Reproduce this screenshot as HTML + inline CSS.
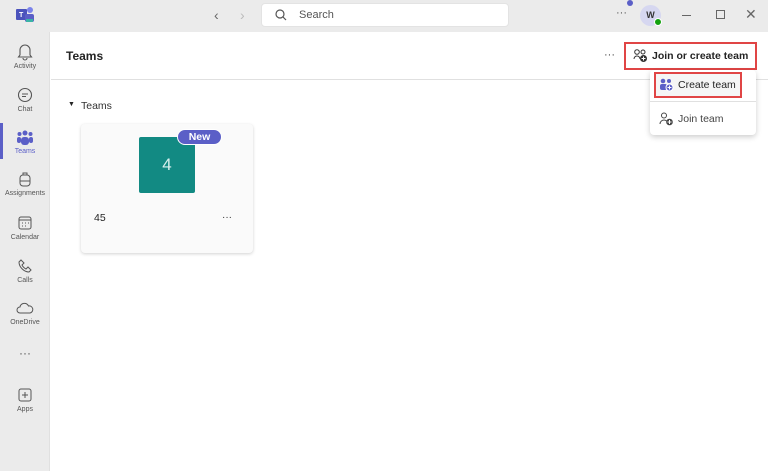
<!DOCTYPE html>
<html><head><style>
*{margin:0;padding:0;box-sizing:border-box}
body{width:768px;height:471px;overflow:hidden;background:#fff;font-family:"Liberation Sans",sans-serif;position:relative;color:#242424}
.a{position:absolute}
.top{left:0;top:0;width:768px;height:32px;background:#ebebeb}
.rail{left:0;top:32px;width:50px;height:439px;background:#ebebeb;border-right:1px solid #e0e0e0}
.ri{position:absolute;left:0;width:50px;text-align:center;font-size:7px;color:#555}
.ri svg{display:block;margin:0 auto 2px}
</style></head><body>
<div class="a top"></div>
<svg class="a" style="left:16px;top:6px" width="20" height="18" viewBox="0 0 20 18"><rect x="0" y="3" width="11" height="11" rx="1" fill="#4b53bc"/><circle cx="14" cy="4" r="3" fill="#7b83eb"/><rect x="9" y="8" width="9" height="8" rx="2" fill="#5b5fc7"/><rect x="10" y="13" width="7" height="3" fill="#3bb3a6"/><text x="3" y="11" font-size="7" fill="#fff" font-family="Liberation Sans" font-weight="bold">T</text></svg>
<div class="a" style="left:214px;top:7px;font-size:14px;color:#666">&#8249;</div>
<div class="a" style="left:240px;top:7px;font-size:14px;color:#bbb">&#8250;</div>
<div class="a" style="left:261px;top:3px;width:248px;height:24px;background:#fff;border-radius:4px;border:1px solid #e3e3e3"></div>
<svg class="a" style="left:275px;top:9px" width="12" height="12" viewBox="0 0 12 12"><circle cx="5" cy="5" r="4" fill="none" stroke="#555" stroke-width="1.2"/><path d="M8 8l3 3" stroke="#555" stroke-width="1.2"/></svg>
<div class="a" style="left:299px;top:9px;font-size:11px;color:#555">Search</div>
<div class="a" style="left:616px;top:7px;font-size:11px;color:#555">···</div>
<div class="a" style="left:627px;top:0;width:6px;height:6px;border-radius:50%;background:#5b5fc7"></div>
<div class="a" style="left:640px;top:5px;width:21px;height:21px;border-radius:50%;background:#d6d7f0;font-size:9px;font-weight:bold;text-align:center;line-height:21px;color:#333">W</div>
<div class="a" style="left:654px;top:18px;width:8px;height:8px;border-radius:50%;background:#13a10e;border:1px solid #fff"></div>
<div class="a" style="left:682px;top:15px;width:9px;height:1px;background:#666"></div>
<div class="a" style="left:716px;top:10px;width:9px;height:9px;border:1px solid #666"></div>
<div class="a" style="left:745px;top:6px;font-size:14px;color:#666">✕</div>

<div class="a rail"></div>
<div class="a" style="left:0;top:123px;width:3px;height:36px;background:#5b5fc7"></div>
<div class="ri" style="top:43px"><svg width="16" height="18" viewBox="0 0 16 18"><path d="M3 12V7a5 5 0 0110 0v5l1.5 2h-13z M6 15a2 2 0 004 0" fill="none" stroke="#555" stroke-width="1.1"/></svg>Activity</div>
<div class="ri" style="top:87px"><svg width="16" height="17" viewBox="0 0 16 17"><circle cx="8" cy="8" r="6.5" fill="none" stroke="#555" stroke-width="1.1"/><path d="M5 7h6M5 9.5h4" stroke="#555"/></svg>Chat</div>
<div class="ri" style="top:129px;color:#5b5fc7"><svg width="18" height="17" viewBox="0 0 18 17"><circle cx="9" cy="4" r="2.5" fill="#5b5fc7"/><circle cx="3.5" cy="5" r="2" fill="#5b5fc7"/><circle cx="14.5" cy="5" r="2" fill="#5b5fc7"/><rect x="5" y="8" width="8" height="8" rx="3" fill="#5b5fc7"/><rect x="1" y="8" width="4" height="6" rx="2" fill="#5b5fc7"/><rect x="13" y="8" width="4" height="6" rx="2" fill="#5b5fc7"/></svg>Teams</div>
<div class="ri" style="top:171px"><svg width="16" height="17" viewBox="0 0 16 17"><rect x="3" y="4" width="10" height="11" rx="3" fill="none" stroke="#555"/><path d="M6 4V2h4v2M3 10h10" stroke="#555" fill="none"/></svg>Assignments</div>
<div class="ri" style="top:215px"><svg width="16" height="17" viewBox="0 0 16 17"><rect x="2" y="2" width="12" height="12" rx="2" fill="none" stroke="#555"/><path d="M2 5h12M5 8h1M8 8h1M11 8h1M5 11h1M8 11h1" stroke="#555"/></svg>Calendar</div>
<div class="ri" style="top:258px"><svg width="16" height="17" viewBox="0 0 16 17"><path d="M4 2l3 3-2 2c1 2 2 3 4 4l2-2 3 3-2 2C7 14 2 9 2 4z" fill="none" stroke="#555"/></svg>Calls</div>
<div class="ri" style="top:300px"><svg width="18" height="17" viewBox="0 0 18 17"><path d="M4 13a3 3 0 010-6 4.5 4.5 0 018.5-1A3.5 3.5 0 0114 13z" fill="none" stroke="#555"/></svg>OneDrive</div>
<div class="ri" style="top:346px;font-size:12px">···</div>
<div class="ri" style="top:387px"><svg width="16" height="17" viewBox="0 0 16 17"><rect x="2" y="2" width="12" height="12" rx="2" fill="none" stroke="#555"/><path d="M8 5v6M5 8h6" stroke="#555"/></svg>Apps</div>

<div class="a" style="left:66px;top:49px;font-size:12px;font-weight:bold">Teams</div>
<div class="a" style="left:51px;top:79px;width:717px;height:1px;background:#e0e0e0"></div>
<div class="a" style="left:604px;top:49px;font-size:11px;color:#444">···</div>
<div class="a" style="left:624px;top:42px;width:133px;height:28px;border:2px solid #e04545"></div>
<svg class="a" style="left:633px;top:48px" width="15" height="15" viewBox="0 0 15 15"><circle cx="4" cy="4" r="2.3" fill="none" stroke="#333"/><circle cx="10" cy="4" r="2" fill="none" stroke="#333"/><path d="M1 11a3 3 0 016 0" fill="none" stroke="#333"/><circle cx="10.5" cy="10.5" r="3.5" fill="#333"/><path d="M10.5 8.5v4M8.5 10.5h4" stroke="#fff"/></svg>
<div class="a" style="left:652px;top:50px;font-size:10.5px;font-weight:bold;color:#242424">Join or create team</div>
<div class="a" style="left:650px;top:70px;width:106px;height:65px;background:#fff;border-radius:4px;box-shadow:0 2px 6px rgba(0,0,0,.2)"></div>
<div class="a" style="left:654px;top:72px;width:88px;height:26px;border:2px solid #e04545;background:#f5f5f5"></div>
<svg class="a" style="left:659px;top:78px" width="15" height="14" viewBox="0 0 15 14"><circle cx="4" cy="3" r="2.3" fill="#5b5fc7"/><circle cx="10" cy="3" r="2" fill="#5b5fc7"/><rect x="1" y="6" width="7" height="6" rx="2" fill="#5b5fc7"/><circle cx="10.5" cy="9.5" r="3.5" fill="#5b5fc7" stroke="#fff"/><path d="M10.5 7.5v4M8.5 9.5h4" stroke="#fff"/></svg>
<div class="a" style="left:678px;top:79px;font-size:10.5px">Create team</div>
<div class="a" style="left:650px;top:101px;width:106px;height:1px;background:#e0e0e0"></div>
<svg class="a" style="left:659px;top:112px" width="15" height="14" viewBox="0 0 15 14"><circle cx="5" cy="3.5" r="2.5" fill="none" stroke="#444"/><path d="M1 12a4 4 0 018 0" fill="none" stroke="#444"/><circle cx="10.5" cy="10" r="3.3" fill="#444"/><path d="M10.5 8v4M8.5 10h4" stroke="#fff"/></svg>
<div class="a" style="left:678px;top:113px;font-size:10.5px;color:#444">Join team</div>

<div class="a" style="left:68px;top:101px;font-size:7px">▼</div>
<div class="a" style="left:81px;top:100px;font-size:10.5px;color:#333">Teams</div>
<div class="a" style="left:81px;top:124px;width:172px;height:129px;background:#fafafa;border-radius:4px;box-shadow:0 1px 3px rgba(0,0,0,.18)"></div>
<div class="a" style="left:139px;top:137px;width:56px;height:56px;background:#128a83;border-radius:2px;color:#d8f0ee;font-size:17px;text-align:center;line-height:56px">4</div>
<div class="a" style="left:177px;top:129px;width:45px;height:16px;background:#5b5fc7;border-radius:8px;border:1px solid #fff;color:#fff;font-size:10.5px;font-weight:bold;text-align:center;line-height:14px">New</div>
<div class="a" style="left:94px;top:212px;font-size:10.5px">45</div>
<div class="a" style="left:222px;top:212px;font-size:10px;color:#333">···</div>
</body></html>
